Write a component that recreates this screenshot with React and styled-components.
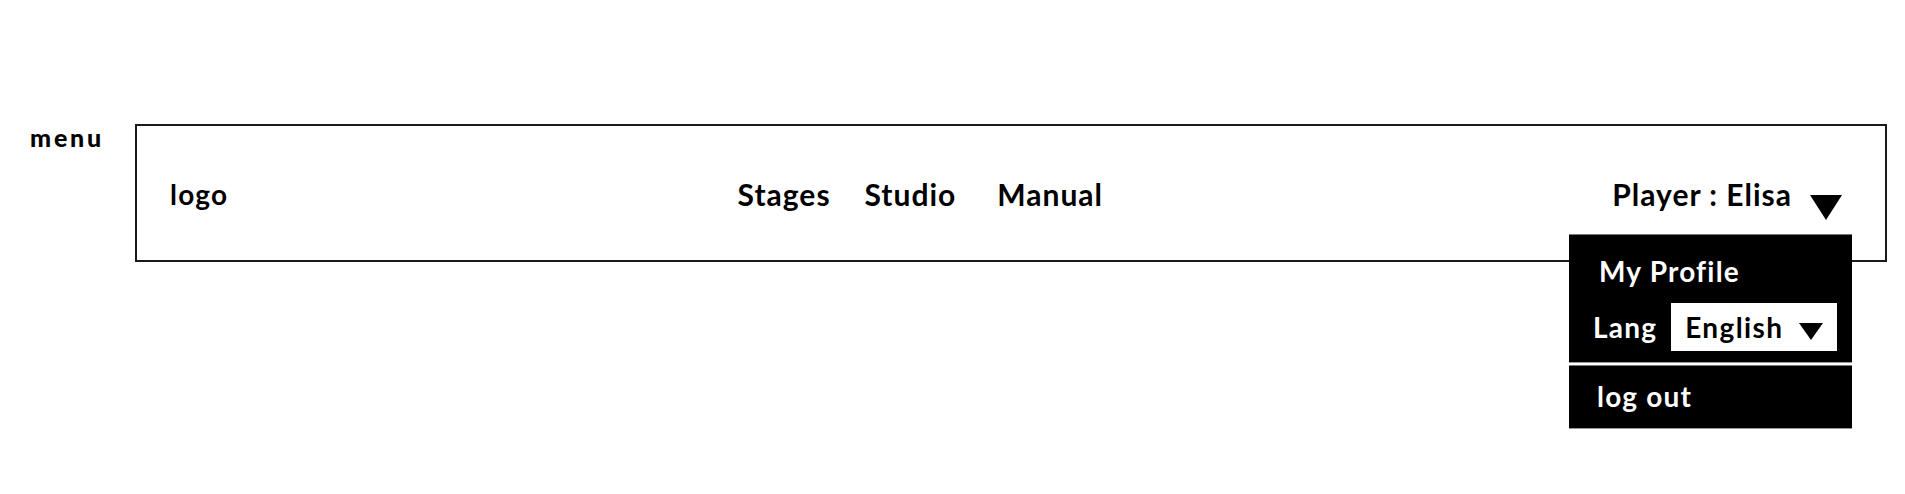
import React from "react";
import styled, { createGlobalStyle } from "styled-components";

const GlobalStyle = createGlobalStyle`
  html, body { margin: 0; padding: 0; background: #fff; }
  body { font-family: "Lato", "Noto Sans", sans-serif; color: #000; }
`;

const Page = styled.div`
  display: flex;
  align-items: flex-start;
  min-height: 494px;
  box-sizing: border-box;
  padding: 124px 18px 0 30px;
`;

const MenuLabel = styled.div`
  width: 105px;
  flex: none;
  font-size: 25px;
  font-weight: 900;
  letter-spacing: 2.8px;
  line-height: 1;
  padding-top: 1px;
`;

const Header = styled.header`
  position: relative;
  flex: 1;
  height: 138px;
  box-sizing: border-box;
  border: 2px solid #1a1a1a;
  display: flex;
  align-items: center;
  justify-content: space-between;
  padding: 0 43px 0 33px;
`;

const Logo = styled.div`
  font-size: 28px;
  font-weight: 700;
  letter-spacing: 1.2px;
  margin-top: 2px;
`;

const Nav = styled.nav`
  display: flex;
  gap: 34px;
  margin-top: 2px;
`;

const NavLink = styled.a`
  font-size: 30px;
  font-weight: 700;
  letter-spacing: 1px;
  color: #000;
  text-decoration: none;
  margin-left: ${(p) => (p.$extra ? "7px" : "0")};
`;

const Player = styled.div`
  display: flex;
  align-items: center;
  gap: 18px;
  margin-top: 2px;
`;

const PlayerName = styled.span`
  font-size: 30px;
  font-weight: 700;
  letter-spacing: 1px;
`;

const Triangle = styled.span`
  display: inline-block;
  width: 0;
  height: 0;
  border-left: ${(p) => p.$w / 2}px solid transparent;
  border-right: ${(p) => p.$w / 2}px solid transparent;
  border-top: ${(p) => p.$h}px solid #000;
  margin-top: ${(p) => p.$offset || 0}px;
`;

const Dropdown = styled.div`
  position: absolute;
  z-index: 2;
  top: 108px;
  right: 33px;
  width: 283px;
  display: flex;
  flex-direction: column;
  gap: 2px;
`;

const Section = styled.div`
  background: #000;
  color: #fff;
  border-top: 1px solid #777;
  border-bottom: 1px solid #999;
  box-sizing: border-box;
  height: ${(p) => p.$h}px;
  display: flex;
  flex-direction: column;
  padding: ${(p) => p.$pad};
`;

const MenuItem = styled.div`
  font-size: 28px;
  font-weight: 700;
  letter-spacing: 1.2px;
  line-height: 1;
  padding-left: ${(p) => p.$indent || 0}px;
`;

const LangRow = styled.div`
  display: flex;
  align-items: center;
  gap: 14px;
  margin-top: 18px;
`;

const Select = styled.div`
  background: #fff;
  color: #000;
  width: 166px;
  height: 48px;
  box-sizing: border-box;
  display: flex;
  align-items: center;
  padding: 0 16px 0 14px;
  gap: 16px;
  font-size: 28px;
  font-weight: 700;
  letter-spacing: 1.4px;
`;

export default function App() {
  return (
    <>
      <GlobalStyle />
      <Page>
        <MenuLabel>menu</MenuLabel>
        <Header>
          <Logo>logo</Logo>
          <Nav>
            <NavLink href="#">Stages</NavLink>
            <NavLink href="#">Studio</NavLink>
            <NavLink href="#" $extra>Manual</NavLink>
          </Nav>
          <Player>
            <PlayerName>Player : Elisa</PlayerName>
            <Triangle $w={32} $h={25} $offset={26} />
          </Player>
          <Dropdown>
            <Section $h={129} $pad="22px 0 0 24px">
              <MenuItem $indent={6}>My Profile</MenuItem>
              <LangRow>
                <MenuItem>Lang</MenuItem>
                <Select>
                  <span>English</span>
                  <Triangle $w={25} $h={17} $offset={8} />
                </Select>
              </LangRow>
            </Section>
            <Section $h={64} $pad="16px 0 0 28px">
              <MenuItem>log out</MenuItem>
            </Section>
          </Dropdown>
        </Header>
      </Page>
    </>
  );
}
